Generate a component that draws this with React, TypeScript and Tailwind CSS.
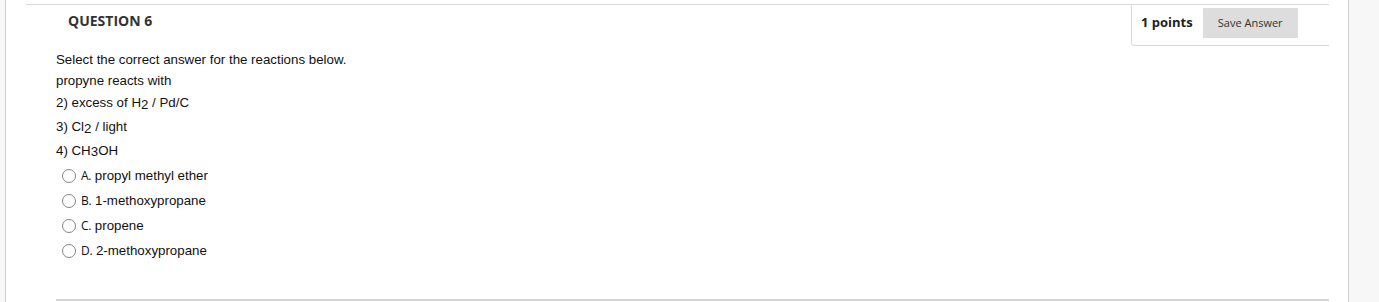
import React from "react";

const arial = { fontFamily: '"Liberation Sans", Arial, sans-serif' };

function Radio() {
  return (
    <span className="inline-block w-[14px] h-[14px] rounded-full border border-[#858585] bg-white shrink-0" />
  );
}

export default function App() {
  const options = [
    ["A.", "propyl methyl ether"],
    ["B.", "1-methoxypropane"],
    ["C.", "propene"],
    ["D.", "2-methoxypropane"],
  ];
  return (
    <div className="flex w-[1379px] h-[302px] bg-white overflow-hidden">
      <div className="w-[6px] shrink-0 bg-[#f7f7f7] border-r border-[#cfcfcf]" />
      <div className="flex-1 min-w-0 pl-[20px] pr-[19px] pt-[4px] bg-white">
        <div className="border-t border-[#d9d9d9]">
          <div className="flex items-start justify-between h-[41px]">
            <h3
              className="ml-[42px] mt-[6px] text-[14px] leading-[20px] font-bold text-[#333]"
              style={{ fontFamily: '"Open Sans", sans-serif' }}
            >
              QUESTION 6
            </h3>
            <div
              className="w-[198px] h-[41px] border-l border-b border-[#d9d9d9] rounded-bl-[4px] flex items-start pt-[3px] pl-[9px] gap-[10px]"
              style={{ fontFamily: '"Open Sans", sans-serif' }}
            >
              <span className="text-[13px] font-bold text-[#222] leading-[30px] h-[30px] -mt-[1px]">1 points</span>
              <span className="w-[95px] h-[30px] bg-[#dddddd] text-[11px] text-[#333] flex items-center justify-center">
                Save Answer
              </span>
            </div>
          </div>
          <div className="pl-[30px] pt-[3px] text-[13.3px] text-[#111]" style={arial}>
            <div className="flex flex-col">
              <p className="h-[21px] leading-[21px]">Select the correct answer for the reactions below.</p>
              <p className="h-[21px] leading-[21px]">propyne reacts with</p>
              <p className="h-[24px] leading-[24px]">
                2) excess of H<span className="relative top-[2px]">2</span> / Pd/C
              </p>
              <p className="h-[24px] leading-[24px]">
                3) Cl<span className="relative top-[2px]">2</span> / light
              </p>
              <p className="h-[24px] leading-[24px]">
                4) CH<span className="relative top-[1px]">3</span>OH
              </p>
            </div>
            <div className="flex flex-col pl-[6px]">
              {options.map(([l, t]) => (
                <div key={l} className="flex items-center h-[25px] gap-[5px]">
                  <Radio />
                  <span>
                    <span className="text-[12px] tracking-[-0.3px]" style={{ fontFamily: '"Open Sans", sans-serif' }}>
                      {l}
                    </span>{" "}
                    {t}
                  </span>
                </div>
              ))}
            </div>
            <div className="mt-[36px] border-t-2 border-[#d4d4d4]" />
          </div>
        </div>
      </div>
      <div className="w-[31px] shrink-0 bg-[#f7f7f7] border-l border-[#cfcfcf]" />
    </div>
  );
}
